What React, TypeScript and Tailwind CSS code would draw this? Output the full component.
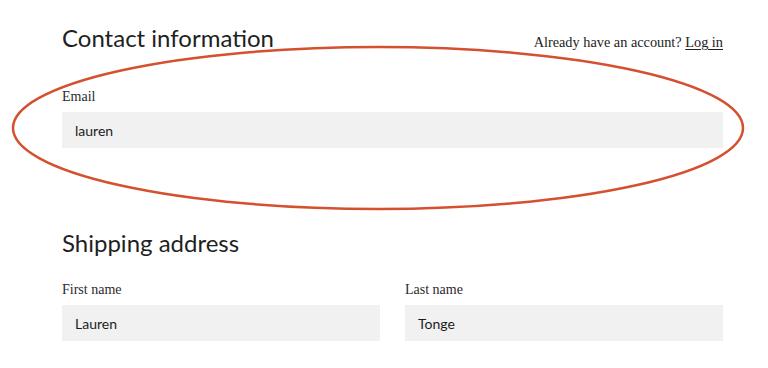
import React from 'react';

const sans = { fontFamily: 'Lato, "Open Sans", sans-serif' };
const serif = { fontFamily: '"Liberation Serif", "DejaVu Serif", serif' };

function Field({ label, value }: { label: string; value: string }) {
  return (
    <div className="flex flex-col">
      <label className="text-[14px] leading-[20px] text-[#2a2a2a]" style={serif}>
        {label}
      </label>
      <div
        className="mt-[5px] h-[36px] bg-[#f1f1f1] px-[13px] flex items-center text-[14px] text-[#1c1c1c]"
        style={sans}
      >
        {value}
      </div>
    </div>
  );
}

export default function App() {
  return (
    <div className="relative w-[768px] h-[368px] bg-white overflow-hidden">
      <div className="pl-[62px] pr-[45px] pt-[22px]">
        {/* Contact information */}
        <div className="flex items-baseline justify-between">
          <h2 className="text-[24px] leading-[32px] text-[#1f1f1f]" style={sans}>
            Contact information
          </h2>
          <p className="text-[14.3px] leading-[20px] text-[#222]" style={serif}>
            Already have an account? <span className="underline underline-offset-2">Log in</span>
          </p>
        </div>
        <div className="mt-[33px]">
          <Field label="Email" value="lauren" />
        </div>

        {/* Shipping address */}
        <h2 className="mt-[79px] text-[24px] leading-[32px] text-[#1f1f1f]" style={sans}>
          Shipping address
        </h2>
        <div className="mt-[21px] grid grid-cols-2 gap-x-[25px]">
          <Field label="First name" value="Lauren" />
          <Field label="Last name" value="Tonge" />
        </div>
      </div>

      {/* hand-drawn highlight */}
      <svg className="absolute left-0 top-0 pointer-events-none" width="768" height="368">
        <ellipse cx="378" cy="128" rx="365" ry="81" fill="none" stroke="#d4502f" strokeWidth="2.5" />
      </svg>
    </div>
  );
}
